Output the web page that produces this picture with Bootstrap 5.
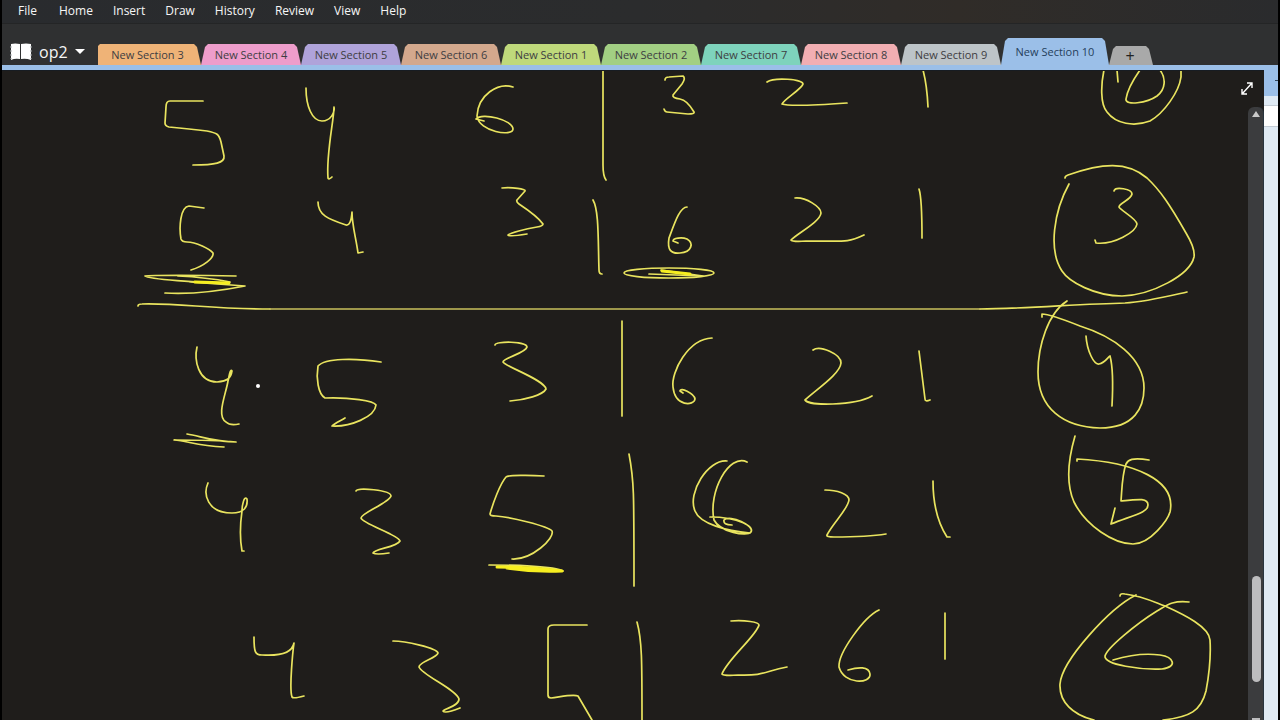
<!DOCTYPE html>
<html lang="en">
<head>
<meta charset="utf-8">
<meta name="viewport" content="width=device-width, initial-scale=1">
<title>op2 - New Section 10</title>
<link href="https://cdn.jsdelivr.net/npm/bootstrap@5.3.0/dist/css/bootstrap.min.css" rel="stylesheet">
<style>
  body { background: #000; color: #f4f4f4; font-family: "Open Sans", "Noto Sans", sans-serif; }
  .app-window { border: solid #000; border-width: 0 2px; }
  .menu-strip { background: linear-gradient(90deg, #292b2e, #2b2c2d 50%, #302c28 75%, #2a2b2d); height: 24px; padding-left: 6px; border-bottom: 1px solid #242526; }
  .menu-strip button { font-size: 12px; line-height: 22px; padding: 0 10px; color: #f6f6f6; background: none; border: 0; }
  .menu-strip button:first-child { padding-right: 12px; }
  .section-strip { background: #2f3031; height: 46px; border-bottom: 5px solid #9bbfe8; }
  .notebook-pick { width: 96px; height: 41px; padding: 14px 0 0 8px; gap: 7px; font-size: 16px; line-height: 24px; color: #f6f6f6; background: none; border: 0; }
  .caret-down { border: 5px solid transparent; border-top-color: #fff; border-bottom: 0; }
  .section-tab { width: 100px; height: 21px; border: 0; padding: 0; font-size: 11px; line-height: 20px; color: #3d3d42; white-space: nowrap;
    clip-path: polygon(0 100%, 4px 3px, 7px 0, calc(100% - 7px) 0, calc(100% - 4px) 3px, 100% 100%); }
  .tab-first { width: 103px; padding-right: 4px; clip-path: polygon(0 100%, 0 2px, 2px 0, calc(100% - 7px) 0, calc(100% - 4px) 3px, 100% 100%); }
  .tab-current { width: 108px; height: 27px; color: #25405c; }
  .tab-add { width: 44px; height: 19px; font-size: 16px; line-height: 16px; color: #222; padding-right: 2px; }
  .c-orange { background: #efb377; } .c-pink { background: #ee9dcb; } .c-violet { background: #afa3da; }
  .c-tan { background: #d3a88d; } .c-lime { background: #bfd97b; } .c-green { background: #a2cf83; }
  .c-teal { background: #7ed3bc; } .c-rose { background: #f1aeb2; } .c-grey { background: #bdc4c8; }
  .c-blue { background: #9bbfe8; } .c-add { background: #a9a9a9; }
  .note-page { background: #1f1d1b; border-top: 1px solid #171c22; min-width: 0; }
  .ink { fill: none; stroke: #e9e45f; stroke-width: 1.7; stroke-linecap: round; stroke-linejoin: round; }
  .ink .heavy { stroke: #f6ee20; stroke-width: 3; }
  .ink .rule { stroke: #c9c05c; }
  .expand-btn { top: 9px; right: 9px; width: 16px; height: 16px; }
  .scroll-rail { top: 36px; right: 0; bottom: 0; width: 16px; background: #3b3c3e; border-radius: 6px 6px 0 0; border-right: 1px solid #28343e; padding-top: 4px; }
  .arrow-up { border: 4px solid transparent; border-bottom: 6px solid #c9c9c9; border-top: 0; }
  .rail-thumb { top: 76.5%; height: 17.3%; width: 9px; left: 4px; background: #bdbdbf; border-radius: 5px; }
  .rail-end { bottom: 0; left: 4px; width: 8px; height: 2px; background: #bdbdbf; }
  .page-pane { width: 14px; background: #dfeaf4; }
  .pane-head { height: 26px; background: #9bbfe8; padding-top: 10px; }
  .pane-mark { width: 3px; height: 1px; background: #31465c; }
  .pane-search { height: 22px; margin-top: 9px; background: #fff; border: solid #c4cdd6; border-width: 1px 0; }
</style>
</head>
<body>
<div class="app-window d-flex flex-column vh-100 overflow-hidden">
  <nav class="menu-strip d-flex align-items-start flex-shrink-0" aria-label="Menu">
    <button type="button">File</button>
    <button type="button">Home</button>
    <button type="button">Insert</button>
    <button type="button">Draw</button>
    <button type="button">History</button>
    <button type="button">Review</button>
    <button type="button">View</button>
    <button type="button">Help</button>
  </nav>

  <div class="section-strip d-flex align-items-end flex-shrink-0">
    <button class="notebook-pick d-flex align-items-center flex-shrink-0" type="button">
      <svg width="22" height="18" viewBox="0 0 22 18" aria-hidden="true"><path fill="#fff" d="M1 1Q5 0 10 1V16Q5 15 1 17ZM11 1Q16 0 21 1V17Q16 15 11 16Z"/><path stroke="#aeb2b5" stroke-dasharray="2 2" d="M1 3V16M21 3V16"/></svg>
      <span>op2</span><span class="caret-down"></span>
    </button>
    <div class="d-flex align-items-end" role="tablist" aria-label="Sections">
      <button class="section-tab tab-first c-orange" role="tab" type="button">New Section 3</button>
      <button class="section-tab c-pink" role="tab" type="button">New Section 4</button>
      <button class="section-tab c-violet" role="tab" type="button">New Section 5</button>
      <button class="section-tab c-tan" role="tab" type="button">New Section 6</button>
      <button class="section-tab c-lime" role="tab" type="button">New Section 1</button>
      <button class="section-tab c-green" role="tab" type="button">New Section 2</button>
      <button class="section-tab c-teal" role="tab" type="button">New Section 7</button>
      <button class="section-tab c-rose" role="tab" type="button">New Section 8</button>
      <button class="section-tab c-grey" role="tab" type="button">New Section 9</button>
      <button class="section-tab tab-current c-blue" role="tab" type="button" aria-selected="true">New Section 10</button>
    </div>
    <button class="section-tab tab-add c-add" type="button">+</button>
  </div>

  <div class="d-flex flex-grow-1 overflow-hidden">
    <main class="note-page flex-grow-1 position-relative overflow-hidden">
      <svg class="ink d-block w-100" viewBox="2 71 1262 649" role="img" aria-label="Handwritten rows of digits">
        <!-- first row -->
        <path d="M203 101H170Q166 101 166 107L165 123Q165 126 169 127Q190 129 207 131C217 133 219 134 221 142L224 156C225 163 215 165 193 165"/>
        <path d="M306 88C306 106 312 121 322 121C331 121 335 112 334 107C334 120 326 154 328 178Q329 180 332 177"/>
        <path d="M513 87C498 82 478 95 477 116C479 132 513 137 513 129C513 120 482 112 476 119L484 121"/>
        <path d="M603 70V165Q603 176 606 180"/>
        <path d="M665 80Q665 77 669 77L683 76Q686 78 682 84L673 95Q672 98 680 99Q687 100 694 112Q695 114 688 114L667 112Q665 112 664 109"/>
        <path d="M767 82C774 77 803 79 803 84C802 89 784 99 782 104Q790 107 847 103"/>
        <path d="M923 70Q927 85 928 107"/>
        <path d="M1104 70C1101 84 1100 104 1107 112C1116 124 1134 127 1150 121C1164 113 1179 92 1181 77V70M1117 70L1118 82M1140 70C1133 80 1127 92 1126 99C1125 106 1147 103 1157 96C1166 89 1166 78 1160 70"/>
        <!-- second row -->
        <path d="M204 208L189 206C180 207 179 228 181 239Q182 242 187 242C196 242 210 249 213 253C214 258 204 266 191 270"/>
        <path d="M236 276C200 275 150 275 145 276C148 279 200 283 229 283M178 276C200 277 220 280 230 282M190 282L245 286C230 289 200 295 165 293"/>
        <path class="heavy" d="M195 282L229 283"/>
        <path d="M318 202C318 215 328 219 346 225Q351 226 352 212C352 225 356 238 358 253L363 252"/>
        <path d="M502 188C512 187 526 189 525 191L517 200Q516 202 519 204C528 210 538 217 543 224Q543 226 537 227C525 229 510 233 508 235Q509 237 527 234"/>
        <path d="M593 200C599 210 598 240 599 270Q599 274 602 274"/>
        <path d="M687 207C680 207 675 222 669 238C667 250 671 254 680 253C692 252 694 243 687 239C682 237 673 238 673 241L678 243"/>
        <ellipse cx="669" cy="273" rx="45" ry="5"/>
        <path d="M661 270L703 276L649 274"/><path class="heavy" d="M662 271L690 274"/>
        <path d="M795 198C806 197 821 207 821 213C820 222 798 233 791 240Q792 242 806 241C845 241 847 243 864 235"/>
        <path d="M919 189Q922 198 922 238"/>
        <path d="M1065 178Q1065 176 1068 175C1102 163 1127 161 1147 178C1160 190 1170 205 1186 233C1192 243 1195 251 1194 257C1190 275 1152 295 1122 296C1095 296 1069 282 1062 271C1048 250 1054 211 1069 184"/>
        <path d="M1114 191C1115 186 1132 189 1132 194C1131 200 1119 203 1119 207C1120 210 1137 219 1137 224C1136 232 1114 245 1096 243L1095 240"/>
        <!-- divider -->
        <path d="M138 306Q138 304 142 304C180 303 210 309 270 309M980 309C1020 309 1080 304 1125 303C1145 302 1165 297 1187 292"/>
        <path class="rule" d="M270 309H980"/>
        <!-- third row -->
        <path d="M197 347C194 360 198 382 217 382C228 381 231 378 232 371C230 368 229 378 228 381C226 394 216 416 226 422Q230 426 239 424"/>
        <path d="M187 434C200 436 215 442 236 442C215 440 190 440 174 440C188 441 197 446 224 447"/>
        <circle cx="258" cy="386" r="2" fill="#fff" stroke="none"/>
        <path d="M381 362C355 358 325 358 318 366C316 378 318 394 325 398C350 397 374 401 376 405C375 417 350 427 332 426C335 423 340 421 345 418"/>
        <path d="M495 345C495 341 527 341 527 347C526 353 503 358 503 362C504 366 545 380 546 389C543 395 525 400 510 401"/>
        <path d="M622 321V416"/>
        <path d="M712 338C688 339 671 372 673 387C675 407 694 406 695 399C694 393 680 387 680 391L683 393"/>
        <path d="M813 350C820 345 841 354 841 363C840 374 817 389 805 400C808 406 854 406 872 396"/>
        <path d="M919 351L925 399Q925 402 930 400"/>
        <path d="M1067 301C1048 313 1038 346 1038 372C1038 408 1063 427 1100 428C1135 428 1144 407 1144 388C1144 357 1112 336 1080 326C1065 320 1050 314 1042 314V317"/>
        <path d="M1086 336C1087 351 1094 365 1099 364C1105 363 1108 357 1110 356C1113 367 1113 387 1112 406"/>
        <!-- fourth row -->
        <path d="M208 483C203 494 207 513 232 513C244 513 248 507 247 499C244 495 242 506 242 511C240 525 240 540 242 551H244"/>
        <path d="M356 491C357 487 391 490 391 496C389 503 361 513 361 518C363 524 399 535 400 541C397 547 374 549 373 553Q376 555 389 553"/>
        <path d="M544 476C530 475 508 475 506 477C500 484 493 503 490 514Q490 516 496 516C510 517 548 526 552 531C555 538 532 560 512 559"/>
        <path d="M489 565C510 565 555 566 563 571"/><path class="heavy" d="M497 567C520 567 545 569 562 571C540 572 520 570 507 568"/>
        <path d="M629 454C634 480 634 490 634 586"/>
        <path d="M727 461C708 459 687 493 695 511C700 524 727 531 750 533C757 527 738 517 710 517M747 462C729 453 708 492 714 520C720 532 747 537 751 532C755 526 730 514 724 520Q723 525 732 525"/>
        <path d="M825 490C837 490 849 494 849 500C848 509 833 523 827 535Q826 537 834 537Q868 537 886 534"/>
        <path d="M933 481C933 501 936 520 947 537H950"/>
        <path d="M1075 436C1068 460 1066 484 1074 502C1086 526 1114 544 1133 544C1151 544 1168 519 1170 512C1177 480 1134 462 1077 459V461"/>
        <path d="M1149 460C1132 457 1128 460 1126 464C1122 475 1122 489 1121 501C1140 499 1148 498 1148 505C1148 512 1137 514 1111 524L1115 508"/>
        <!-- fifth row -->
        <path d="M254 637C254 652 255 655 262 655C278 656 292 654 294 643C293 650 289 689 292 697Q293 699 304 696"/>
        <path d="M393 641C405 641 437 648 438 653C437 658 419 662 419 667C422 675 457 690 459 699C459 706 446 708 443 711Q445 714 460 708"/>
        <path d="M587 625H554Q548 625 548 629V695Q548 698 551 698C560 697 573 694 578 696L592 720"/>
        <path d="M637 622C642 640 642 660 642 720"/>
        <path d="M731 621C745 620 759 622 759 625C757 635 727 660 722 674Q723 676 738 675C765 676 765 671 787 667"/>
        <path d="M879 610C864 617 838 653 839 667C844 685 871 684 870 674C869 666 858 667 848 670"/>
        <path d="M945 613V659"/>
        <path d="M1136 595C1110 608 1062 660 1060 684C1059 702 1073 715 1094 720M1120 596Q1120 593 1125 594C1142 596 1154 602 1165 606C1185 615 1209 627 1210 640C1211 656 1209 675 1206 691C1201 711 1190 717 1163 720"/>
        <path d="M1189 602C1172 600 1166 606 1157 611C1136 624 1107 648 1105 656C1104 665 1142 670 1162 669C1178 667 1174 657 1160 655C1145 653 1126 656 1113 660"/>
      </svg>
      <button class="expand-btn btn p-0 border-0 position-absolute d-flex" type="button" aria-label="Full page view">
        <svg width="16" height="16" viewBox="0 0 16 16" fill="none" stroke="#fff" stroke-width="1.4"><path d="M3 14L13 3M8 3H13V8M3 9V14H8"/></svg>
      </button>
      <div class="scroll-rail position-absolute d-flex justify-content-center align-items-start">
        <span class="arrow-up"></span><span class="rail-thumb position-absolute"></span><span class="rail-end position-absolute"></span>
      </div>
    </main>
    <aside class="page-pane flex-shrink-0" aria-label="Pages">
      <div class="pane-head d-flex justify-content-end"><span class="pane-mark"></span></div>
      <div class="pane-search"></div>
    </aside>
  </div>
</div>
<script src="https://cdn.jsdelivr.net/npm/bootstrap@5.3.0/dist/js/bootstrap.bundle.min.js"></script>
</body>
</html>
